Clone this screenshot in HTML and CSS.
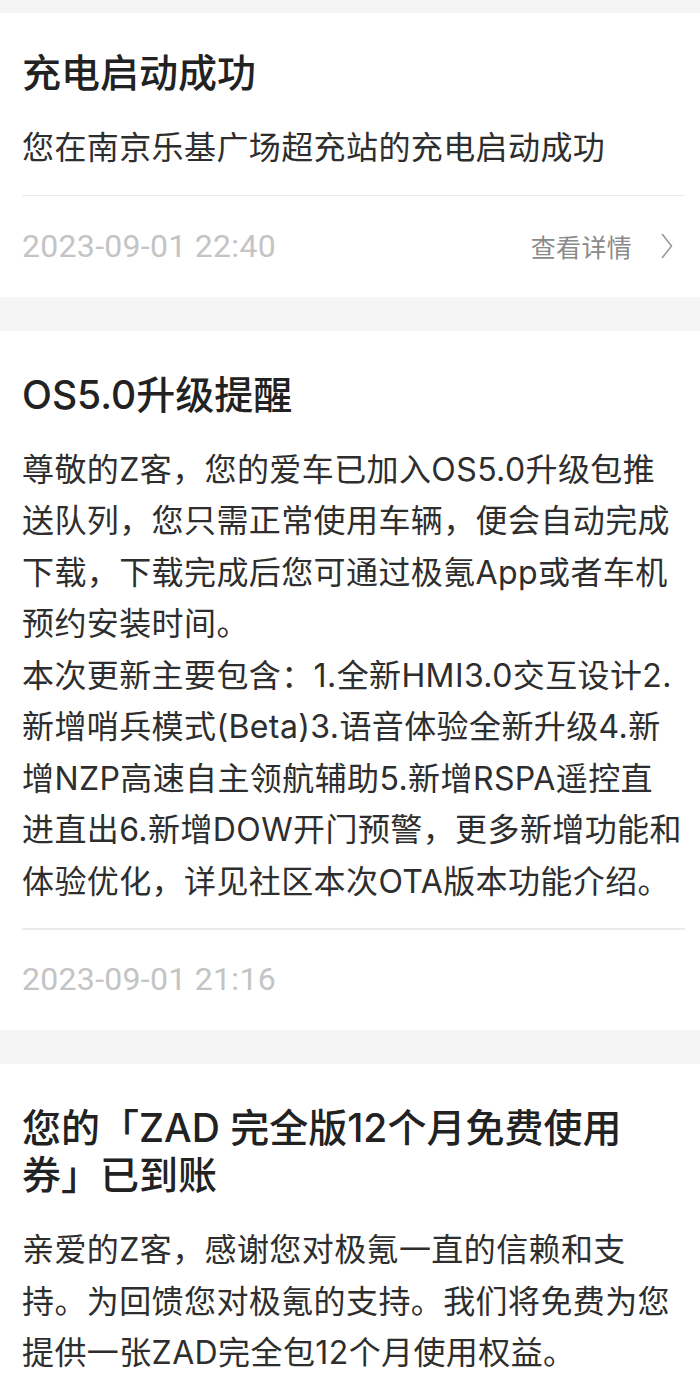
FILE: index.html
```html
<!DOCTYPE html>
<html lang="zh-CN">
<head>
<meta charset="utf-8">
<title>消息</title>
<link rel="stylesheet" href="styles.css">
</head>
<body>
<div class="page">
  <div class="top-band"></div>

  <section class="card card--first">
    <h2 class="card-title">充电启动成功</h2>
    <div class="card-body">
      <p>您在南京乐基广场超充站的充电启动成功</p>
    </div>
    <div class="divider"></div>
    <div class="card-foot">
      <span class="date">2023-09-01 22:40</span>
      <a class="detail-link">
        <span class="detail-text">查看详情</span>
        <svg class="chevron" viewBox="0 0 12 26" width="12" height="26" aria-hidden="true">
          <path d="M1.5 1.5 L10.5 13 L1.5 24.5" fill="none" stroke="#9a9a9a" stroke-width="1.6" stroke-linecap="round" stroke-linejoin="round"/>
        </svg>
      </a>
    </div>
  </section>

  <section class="card">
    <h2 class="card-title">OS5.0升级提醒</h2>
    <div class="card-body">
      <p>尊敬的Z客，您的爱车已加入OS5.0升级包推<br>送队列，您只需正常使用车辆，便会自动完成<br>下载，下载完成后您可通过极氪App或者车机<br>预约安装时间。</p>
      <p>本次更新主要包含：1.全新HMI3.0交互设计2.<br>新增哨兵模式(Beta)3.语音体验全新升级4.新<br>增NZP高速自主领航辅助5.新增RSPA遥控直<br>进直出6.新增DOW开门预警，更多新增功能和<br>体验优化，详见社区本次OTA版本功能介绍。</p>
    </div>
    <div class="divider"></div>
    <div class="card-foot">
      <span class="date">2023-09-01 21:16</span>
    </div>
  </section>

  <section class="card">
    <h2 class="card-title">您的「ZAD 完全版12个月免费使用<br>券」已到账</h2>
    <div class="card-body">
      <p>亲爱的Z客，感谢您对极氪一直的信赖和支<br>持。为回馈您对极氪的支持。我们将免费为您<br>提供一张ZAD完全包12个月使用权益。</p>
    </div>
    <div class="divider"></div>
    <div class="card-foot">
      <span class="date">2023-09-01 20:05</span>
    </div>
  </section>
</div>
</body>
</html>
```

FILE: styles.css
```css
html, body {
  margin: 0;
  padding: 0;
  background: #f5f5f5;
}

.page {
  display: flex;
  flex-direction: column;
  gap: 34px;
  background: #f5f5f5;
  font-family: Inter, "Noto Sans CJK SC", sans-serif;
}

.top-band {
  height: 13px;
  margin-bottom: -34px;
}

.card {
  background: #ffffff;
  padding: 40px 15px 31px 22px;
  display: flex;
  flex-direction: column;
}

.card--first {
  padding-top: 36px;
}

.card-title {
  margin: 0 0 26px 0;
  font-size: 39px;
  line-height: 47px;
  font-weight: 500;
  color: #222222;
  white-space: nowrap;
}

.card-body p {
  margin: 0;
  font-size: 32px;
  line-height: 51.5px;
  letter-spacing: 0.4px;
  color: #2e2e2e;
  white-space: nowrap;
}

.divider {
  height: 1.5px;
  background: #ebebeb;
  margin-top: 21px;
}

.card-foot {
  margin-top: 29.5px;
  height: 40px;
  display: flex;
  align-items: center;
  justify-content: space-between;
}

.date {
  font-family: Roboto, "Liberation Sans", sans-serif;
  font-size: 32px;
  line-height: 40px;
  color: #c4c4c4;
  letter-spacing: 0.3px;
}

.detail-link {
  display: flex;
  align-items: center;
  gap: 29px;
  margin-right: 12px;
  text-decoration: none;
}

.detail-text {
  font-family: "Noto Sans CJK SC", sans-serif;
  font-size: 25px;
  line-height: 40px;
  letter-spacing: 0.3px;
  color: #8a8a8a;
}

.chevron {
  display: block;
}
```
